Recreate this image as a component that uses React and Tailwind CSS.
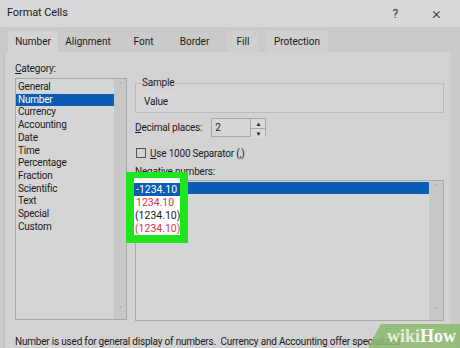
import React from "react";

const cats = ["General","Number","Currency","Accounting","Date","Time","Percentage","Fraction","Scientific","Text","Special","Custom"];

export default function App() {
  return (
    <div className="relative w-[460px] h-[348px] overflow-hidden bg-[#cbcbcb] text-[#1a1a1a]" style={{fontFamily: 'Roboto, "Noto Sans", sans-serif'}}>
      {/* title bar */}
      <div className="h-[27px] flex items-center pl-[7px] pr-[19px] bg-[#d8d8d8]">
        <span className="text-[11px] tracking-[-0.1px]">Format Cells</span>
        <span className="ml-auto text-[12px] text-[#333]">?</span>
        <span className="ml-[34px] text-[17px] leading-none font-light text-[#333]">×</span>
      </div>
      {/* tabs */}
      <div className="h-[25px] flex items-end pl-[8px] bg-[#cacaca] text-[10px]">
        <div className="h-[21px] w-[50px] flex items-center justify-center bg-[#d4d4d4]">Number</div>
        <div className="h-[21px] w-[60px] flex items-center justify-center">Alignment</div>
        <div className="h-[21px] w-[51px] flex items-center justify-center">Font</div>
        <div className="h-[21px] w-[51px] flex items-center justify-center">Border</div>
        <div className="h-[21px] w-[46px] flex items-center justify-center">
          <div className="h-[21px] w-[32px] flex items-center justify-center bg-[#cfcfcf]">Fill</div>
        </div>
        <div className="h-[21px] w-[62px] flex items-center justify-center bg-[#cfcfcf]">Protection</div>
      </div>
      {/* panel */}
      <div className="ml-[4px] w-[446px] h-[296px] bg-[#d3d3d3] border-l border-[#bdbdbd] pl-[10px] pt-[10px] text-[10px] tracking-[-0.2px]">
        <div className="flex gap-[8px]">
          <div className="flex flex-col">
            <div className="leading-[14px]"><span className="underline">C</span>ategory:</div>
            <div className="mt-[2px] w-[112px] h-[242px] border border-[#a8a8a8] bg-[#d5d5d5] flex">
              <div className="flex-1 pt-[2px] leading-[12.7px]">
                {cats.map((c) => (
                  <div key={c} className={c === "Number" ? "bg-[#0b5cb5] text-white pl-[2px]" : "pl-[2px]"}>{c}</div>
                ))}
              </div>
              <div className="w-[12px] bg-[#c8c8c8] flex flex-col items-center justify-between text-[8px] text-[#777] py-[2px]">
                <span>˄</span><span>˅</span>
              </div>
            </div>
          </div>
          <div className="flex flex-col w-[309px]">
            <div className="relative mt-[21px] h-[30px] border border-[#bcbcbc] bg-[#d6d6d6]">
              <span className="absolute -top-[8px] left-[5px] px-[1px] bg-[#d3d3d3] leading-[14px]">Sample</span>
              <div className="pl-[8px] pt-[11px] leading-[14px]">Value</div>
            </div>
            <div className="mt-[5px] flex items-center h-[19px]">
              <span><span className="underline">D</span>ecimal places:</span>
              <div className="ml-[9px] w-[40px] h-[19px] border border-[#a8a8a8] bg-[#d6d6d6] pl-[3px] leading-[17px]">2</div>
              <div className="flex flex-col w-[15px] h-[19px] border border-[#a8a8a8] border-l-0">
                <div className="flex-1 flex items-center justify-center bg-[#d9d9d9] border-b border-[#a8a8a8] text-[6px]">▲</div>
                <div className="flex-1 flex items-center justify-center bg-[#d9d9d9] text-[6px]">▼</div>
              </div>
            </div>
            <div className="mt-[9px] flex items-center h-[14px]">
              <div className="w-[10px] h-[10px] border border-[#555] ml-[1px]"></div>
              <span className="ml-[4px]"><span className="underline">U</span>se 1000 Separator (,)</span>
            </div>
            <div className="mt-[5px] leading-[14px]"><span className="underline">N</span>egative numbers:</div>
            <div className="mt-[1px] h-[141px] border border-[#a8a8a8] bg-[#d5d5d5] flex">
              <div className="flex-1 pt-[1px] pl-[1px]">
                <div className="h-[12px] bg-[#0b5cb5]"></div>
              </div>
              <div className="w-[14px] bg-[#c8c8c8] flex flex-col items-center justify-between text-[8px] text-[#777] py-[2px]">
                <span>˄</span><span>˅</span>
              </div>
            </div>
          </div>
        </div>
        <div className="mt-[14px] text-[10px] leading-[14px] whitespace-nowrap">Number is used for general display of numbers.&nbsp; Currency and Accounting offer specialized</div>
      </div>
      {/* green annotation */}
      <div className="absolute left-[126px] top-[172px] w-[62px] h-[71px] bg-[#1ee61e] p-[6px] pl-[8px]">
        <div className="w-[46px] h-[57px] bg-white pt-[5px] text-[10.5px] leading-[13px]">
          <div className="bg-[#0b5cb5] text-white pl-[2px]">-1234.10</div>
          <div className="text-[#e0333b] pl-[2px]">1234.10</div>
          <div className="pl-[1px]">(1234.10)</div>
          <div className="text-[#e0333b] pl-[1px]">(1234.10)</div>
        </div>
      </div>
      {/* watermark */}
      <div className="absolute right-0 bottom-0 w-[92px] h-[24px] bg-[#8cb870]/85 [clip-path:polygon(14%_0,100%_0,100%_100%,0_100%)] flex items-center justify-end pr-[4px]">
        <span className="text-[18px] font-bold text-[#e3efd8]" style={{fontFamily: '"Liberation Serif", serif'}}>wiki</span>
        <span className="text-[18px] font-bold text-white" style={{fontFamily: '"Liberation Serif", serif'}}>How</span>
      </div>
    </div>
  );
}
